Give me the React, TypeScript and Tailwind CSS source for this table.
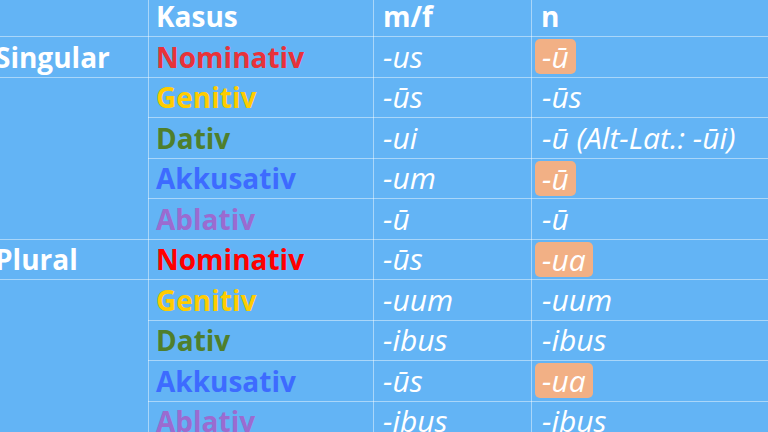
import React from "react";

type Row = {
  kasus: string;
  color: string;
  mf: string;
  n: string;
  mark?: boolean;
};

const singular: Row[] = [
  { kasus: "Nominativ", color: "text-[#e8323a]", mf: "-us", n: "-ū", mark: true },
  { kasus: "Genitiv", color: "text-[#ffcc00]", mf: "-ūs", n: "-ūs" },
  { kasus: "Dativ", color: "text-[#4f7f2c]", mf: "-ui", n: "-ū (Alt-Lat.: -ūi)" },
  { kasus: "Akkusativ", color: "text-[#3d6bff]", mf: "-um", n: "-ū", mark: true },
  { kasus: "Ablativ", color: "text-[#9b6bd0]", mf: "-ū", n: "-ū" },
];

const plural: Row[] = [
  { kasus: "Nominativ", color: "text-[#ff0000]", mf: "-ūs", n: "-ua", mark: true },
  { kasus: "Genitiv", color: "text-[#ffcc00]", mf: "-uum", n: "-uum" },
  { kasus: "Dativ", color: "text-[#4f7f2c]", mf: "-ibus", n: "-ibus" },
  { kasus: "Akkusativ", color: "text-[#3d6bff]", mf: "-ūs", n: "-ua", mark: true },
  { kasus: "Ablativ", color: "text-[#9b6bd0]", mf: "-ibus", n: "-ibus" },
];

const base = "h-[40.5px] p-0 border border-white/45 align-middle whitespace-nowrap";
const cell = `${base} pl-[9px]`;
const kcell = `${base} pl-[7px]`;
const ncell = `${base} pl-[3px]`;

function Group({ label, rows }: { label: string; rows: Row[] }) {
  return (
    <>
      {rows.map((r, i) => (
        <tr key={i}>
          {i === 0 && <td className={`${cell} font-bold text-[28px] text-white`}>{label}</td>}
          {i === 1 && <td rowSpan={4} className={cell}></td>}
          <td className={`${kcell} font-bold text-[28px] ${r.color}`}>{r.kasus}</td>
          <td className={`${cell} italic text-[30px] text-white`}>{r.mf}</td>
          <td className={`${ncell} italic text-[30px] text-white`}>
            {r.mark ? (
              <span className="inline-block h-[35px] rounded-[5px] bg-[#f2b085] px-[7px] leading-[35px]">{r.n}</span>
            ) : (
              <span className="pl-[7px]">{r.n}</span>
            )}
          </td>
        </tr>
      ))}
    </>
  );
}

export default function App() {
  return (
    <div className="w-[768px] h-[432px] overflow-hidden bg-[#63b4f5] font-['Open_Sans',sans-serif] leading-none">
      <table className="border-collapse table-fixed w-[900px] -ml-[15px] -mt-[4.5px]">
        <colgroup>
          <col className="w-[163px]" />
          <col className="w-[225px]" />
          <col className="w-[158px]" />
          <col />
        </colgroup>
        <tbody>
          <tr>
            <td className={cell}></td>
            <td className={`${kcell} font-bold text-[28px] text-white`}>Kasus</td>
            <td className={`${cell} font-bold text-[28px] text-white`}>m/f</td>
            <td className={`${cell} font-bold text-[28px] text-white`}>n</td>
          </tr>
          <Group label="Singular" rows={singular} />
          <Group label="Plural" rows={plural} />
        </tbody>
      </table>
    </div>
  );
}
